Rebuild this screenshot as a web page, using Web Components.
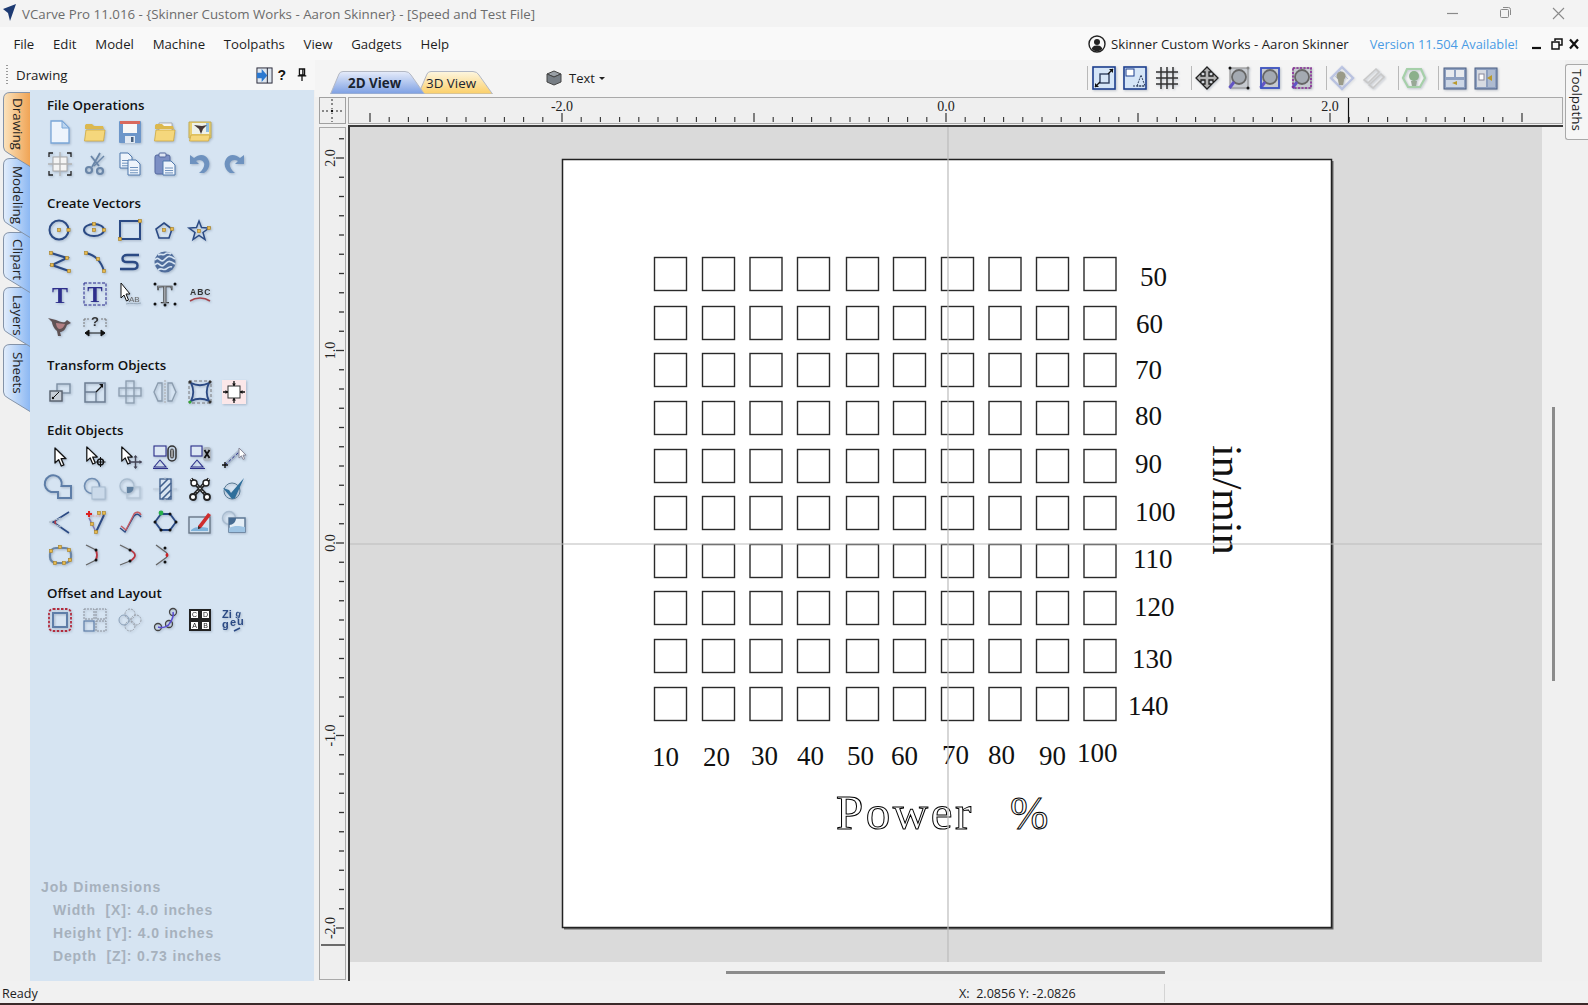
<!DOCTYPE html>
<html lang="en">
<head>
<meta charset="utf-8">
<title>VCarve Pro</title>
<style>
  html, body { margin: 0; height: 100%; background: #f0f0f0; overflow: hidden; }
  body { font: 13px "Open Sans", "Liberation Sans", sans-serif; color: #1c1c1c; }
  #app { display: flex; flex-direction: column; width: 1588px; height: 1005px; }
</style>
</head>
<body>
<div id="app">
  <vc-titlebar>VCarve Pro 11.016 - {Skinner Custom Works - Aaron Skinner} - [Speed and Test File]</vc-titlebar>
  <vc-menubar></vc-menubar>
  <vc-main>
    <vc-sidebar slot="side">
      <vc-group label="File Operations">
        <vc-icon name="new"></vc-icon><vc-icon name="open"></vc-icon><vc-icon name="save"></vc-icon><vc-icon name="openDoc"></vc-icon><vc-icon name="openImg"></vc-icon><i></i>
        <vc-icon name="selAll"></vc-icon><vc-icon name="scissors"></vc-icon><vc-icon name="copy"></vc-icon><vc-icon name="paste"></vc-icon><vc-icon name="undo"></vc-icon><vc-icon name="redo"></vc-icon>
      </vc-group>
      <vc-group label="Create Vectors">
        <vc-icon name="circle"></vc-icon><vc-icon name="ellipse"></vc-icon><vc-icon name="rect"></vc-icon><vc-icon name="polygon"></vc-icon><vc-icon name="star"></vc-icon><i></i>
        <vc-icon name="polyline"></vc-icon><vc-icon name="curve"></vc-icon><vc-icon name="sline"></vc-icon><vc-icon name="wave"></vc-icon><i></i><i></i>
        <vc-icon name="text"></vc-icon><vc-icon name="textBox"></vc-icon><vc-icon name="textCursor"></vc-icon><vc-icon name="textScale"></vc-icon><vc-icon name="textArc"></vc-icon><i></i>
        <vc-icon name="bird"></vc-icon><vc-icon name="dimension"></vc-icon>
      </vc-group>
      <vc-group label="Transform Objects" style="margin-bottom:14px">
        <vc-icon name="move"></vc-icon><vc-icon name="scale"></vc-icon><vc-icon name="align"></vc-icon><vc-icon name="mirror"></vc-icon><vc-icon name="distort"></vc-icon><vc-icon name="center"></vc-icon>
      </vc-group>
      <vc-group label="Edit Objects" rows="32px 32px 34px 32px" style="margin-bottom:14px">
        <vc-icon name="arrow"></vc-icon><vc-icon name="arrowNode"></vc-icon><vc-icon name="arrowMove"></vc-icon><vc-icon name="group"></vc-icon><vc-icon name="ungroup"></vc-icon><vc-icon name="measure"></vc-icon>
        <vc-icon name="weld"></vc-icon><vc-icon name="subtract"></vc-icon><vc-icon name="intersect"></vc-icon><vc-icon name="hatch"></vc-icon><vc-icon name="trim"></vc-icon><vc-icon name="check"></vc-icon>
        <vc-icon name="vee"></vc-icon><vc-icon name="nodes"></vc-icon><vc-icon name="smooth"></vc-icon><vc-icon name="closed"></vc-icon><vc-icon name="pencil"></vc-icon><vc-icon name="fade"></vc-icon>
        <vc-icon name="loop"></vc-icon><vc-icon name="fillet1"></vc-icon><vc-icon name="fillet2"></vc-icon><vc-icon name="fillet3"></vc-icon>
      </vc-group>
      <vc-group label="Offset and Layout">
        <vc-icon name="offset"></vc-icon><vc-icon name="dashSquares"></vc-icon><vc-icon name="dashCircles"></vc-icon><vc-icon name="linked"></vc-icon><vc-icon name="nest"></vc-icon><vc-icon name="zigzag"></vc-icon>
      </vc-group>
      <vc-job slot="job"></vc-job>
    </vc-sidebar>
    <vc-workspace slot="work"></vc-workspace>
  </vc-main>
  <vc-statusbar></vc-statusbar>
</div>

<script>
// Small helpers used by the icon table.
const NAVY = '#2b4a84'
const SLATE = '#6a86a8'
const handle = (x, y) => `<rect x="${x - 1.6}" y="${y - 1.6}" width="3.2" height="3.2" fill="#e6b94f" stroke="#a5802b" stroke-width=".6"/>`
const dot = (x, y, c = '#111', r = 1.5) => `<circle cx="${x}" cy="${y}" r="${r}" fill="${c}"/>`
const pointer = (t = '') => `<path d="M4 2v15l3.6-3.4 2.7 6.4 2.6-1.1-2.7-6.2H15z" fill="#fff" stroke="#111" stroke-width="1.3" stroke-linejoin="round" transform="${t}"/>`
const folder = '<path d="M2 9V5.5L3 4h6l2 2h9l1 3z" fill="#dcb84e"/><path d="M1.5 21 3 10h19l-1.5 11z" fill="#f5d77c" stroke="#cfa93f" stroke-width=".8"/>'
const page = (x, y, w, h, f = '#eef4fb') => `<path d="M${x} ${y}h${w - 4}l4 4v${h - 4}h-${w}z" fill="${f}" stroke="#4f78ad"/><path d="M${x + 2} ${y + h * 0.5}h${w - 4}M${x + 2} ${y + h * 0.68}h${w - 4}M${x + 2} ${y + h * 0.85}h${w - 4}" stroke="#4f78ad" stroke-width=".8"/>`
const mag = extra => `<rect x="3" y="2" width="18" height="20" fill="#c6cad0" stroke="#8a8a8a"/><circle cx="12" cy="11" r="7" fill="#a4aab2" stroke="#666" stroke-width="1.8"/><path d="M7 16 2.5 22" stroke="#6255c4" stroke-width="3"/>${extra}`
const panel = inner => `<rect x="1" y="2" width="22" height="21" fill="#8d9fbf" stroke="#4d6186"/>${inner}`

const ICONS = {
  new: '<path d="M3 1h11l7 7v15H3z" fill="#edf4fc" stroke="#79a6d8" stroke-width="1.3"/><path d="M14 1v7h7z" fill="#bcd5ef" stroke="#79a6d8"/>',
  open: folder,
  save: '<rect x="1" y="1" width="22" height="22" rx="1" fill="#6d96c9"/><rect x="2" y="1" width="20" height="3" fill="#d9685c"/><rect x="5" y="4" width="14" height="9" fill="#f7f7f7"/><rect x="7" y="16" width="10" height="7" fill="#e1e9f3"/><rect x="13" y="17" width="2.5" height="5" fill="#49617f"/>',
  openDoc: `<path d="M6 3h13v10H6z" fill="#f4f4f4" stroke="#999" stroke-width=".7"/>${folder}`,
  openImg: '<path d="M1 2h22v16H1z" fill="#e8cf72" stroke="#c3ad55"/><path d="M4 3h17v11H4z" fill="#eef1e8"/><path d="M18 3h3v9h-3z" fill="#8fbde0"/><path d="M6 5l8 1 5-1-4 4-2 5-2-5z" fill="#463838"/><path d="M1.5 21 3 15h19l-1.5 6z" fill="#f5d77c" stroke="#cfa93f" stroke-width=".8"/>',
  selAll: '<rect x="5" y="5" width="14" height="14" fill="#f4f4f4" stroke="#a8a8a8"/><path d="M12 0v24M0 12h24" stroke="#b2b2b2" stroke-width="1.3"/><path d="M1 5V1h4M19 1h4v4M23 19v4h-4M5 23H1v-4" fill="none" stroke="#222" stroke-width="1.3"/>',
  scissors: `<path d="M17 1 9 15M8 4l8 10" stroke="${SLATE}" stroke-width="1.8"/><path d="M21 4 11 14" stroke="${SLATE}" stroke-width="1.5"/><circle cx="6" cy="18" r="3" fill="none" stroke="${SLATE}" stroke-width="2.2"/><circle cx="17" cy="19" r="3" fill="none" stroke="${SLATE}" stroke-width="2.2"/>`,
  copy: page(2, 1, 12, 15) + page(10, 8, 12, 15),
  paste: '<rect x="2" y="3" width="15" height="19" rx="2" fill="#7c8fc4" stroke="#54689e"/><rect x="6" y="1" width="7" height="4" rx="1" fill="#dde4f2" stroke="#54689e"/>' + page(10, 9, 12, 14),
  undo: '<path d="M2 3v9h9L8 9c3-2 7-1 8 2 1 3-1 7-5 10h5c5-3 7-9 4-14C17 2 11 2 6 6z" fill="#6e92bf"/>',
  redo: '<path d="M22 3v9h-9l3-3c-3-2-7-1-8 2-1 3 1 7 5 10H8C3 18 1 12 4 7 7 2 13 2 18 6z" fill="#6e92bf"/>',

  circle: `<circle cx="11" cy="12" r="9.5" fill="none" stroke="${NAVY}" stroke-width="2"/>${handle(11, 12)}${handle(20.5, 12)}`,
  ellipse: `<ellipse cx="11" cy="12" rx="10" ry="6" fill="none" stroke="${NAVY}" stroke-width="2"/>${handle(11, 12)}${handle(11, 6)}${handle(21, 12)}`,
  rect: `<rect x="2" y="3" width="20" height="18" fill="none" stroke="${NAVY}" stroke-width="2"/>${handle(2, 21)}${handle(22, 3)}`,
  polygon: `<path d="M11 5l8 6-3 9H6l-3-9z" fill="none" stroke="${NAVY}" stroke-width="1.6"/>${handle(11, 12)}${handle(19, 11)}`,
  star: `<path d="M11 3l2.5 6.5 7.5.5-6 4.5 2 7-6-4-6 4 2-7-6-4.5 7.5-.5z" fill="none" stroke="${NAVY}" stroke-width="1.5"/>${handle(11, 13)}${handle(21, 10)}`,
  polyline: `<path d="M3 3l16 5L4 15l17 6" fill="none" stroke="${NAVY}" stroke-width="2.2"/>${handle(3, 3)}${handle(19, 8)}${handle(4, 15)}${handle(21, 21)}`,
  curve: `<path d="M3 3c9 2 15 8 18 18" fill="none" stroke="${NAVY}" stroke-width="1.8"/>${handle(3, 3)}${handle(15, 9)}${handle(21, 21)}`,
  sline: `<path d="M21 5H9c-6 0-6 7 0 7h6c6 0 6 7 0 7H2" fill="none" stroke="${NAVY}" stroke-width="2.4"/>`,
  wave: `<circle cx="12" cy="12" r="10.5" fill="#4f6d9c"/><path d="M2 10c4-5 5 4 9 0s5-5 11-1M2 15c4-5 5 4 9 0s5-5 11-1M5 20c4-3 5 1 8-1s4-3 6-2M5 5c3-2 5 1 7-1s4-1 6 0" fill="none" stroke="#d6e4f2" stroke-width="1.7"/>`,
  text: `<text x="12" y="21" text-anchor="middle" font-family="Liberation Serif" font-weight="700" font-size="24" fill="#2e2f8c">T</text>`,
  textBox: `<rect x="1" y="1" width="22" height="22" fill="none" stroke="#25258a" stroke-dasharray="3 1.5"/><text x="12" y="20" text-anchor="middle" font-family="Liberation Serif" font-weight="700" font-size="23" fill="#2e2f8c">T</text>`,
  textCursor: `<path d="M3 1v15l3-3 2.5 6 2-1-2.5-6H12z" fill="#fff" stroke="#111"/><text x="11" y="20" font-family="Liberation Sans" font-size="8" fill="#666">AB</text><path d="M8 22c5-2 10 1 15-1" stroke="#9ab" fill="none"/>`,
  textScale: `<text x="12" y="21" text-anchor="middle" font-family="Liberation Serif" font-size="25" fill="#a0a4aa" stroke="#333" stroke-width=".6">T</text>${dot(2, 2)}${dot(22, 2)}${dot(2, 22)}${dot(22, 22)}${dot(12, 23)}`,
  textArc: `<text x="2" y="13" font-family="Liberation Sans" font-weight="700" font-size="8.5" letter-spacing="1" fill="#333">ABC</text><path d="M2 19c6-4 14-4 20 0" fill="none" stroke="#a5434a" stroke-width="1.6"/>`,
  bird: '<path d="M0 4l8 2c3 1 6 3 9 2l2-2 4 3-4 2c-2 5-4 7-7 7l1 4h-3l-1-5C6 15 4 10 4 8z" fill="#5f5254"/><path d="M8 9c3 0 6 1 9 1-1 3-3 5-6 5-2-1-3-4-3-6z" fill="#b27f83"/>',
  dimension: `<path d="M1 5h5M18 5h5M1 5v9M23 5v9" stroke="#777" stroke-dasharray="2 1"/><text x="12" y="12" text-anchor="middle" font-family="Liberation Sans" font-weight="700" font-size="13" fill="#333">?</text><path d="M2 19h20M2 19l4-3v6zM22 19l-4-3v6z" stroke="#111" fill="#111"/>`,

  move: '<rect x="9" y="4" width="13" height="9" fill="none" stroke="#7d8fa3" stroke-width="1.4"/><rect x="2" y="11" width="12" height="10" fill="#c7ced7" stroke="#565f6b" stroke-width="1.4"/><path d="M5 18l6-6" stroke="#111"/>' + dot(5, 18, '#111', 1.2),
  scale: '<rect x="2" y="3" width="20" height="19" fill="none" stroke="#6c7d92" stroke-width="1.5"/><path d="M2 12h11V22" fill="none" stroke="#6c7d92" stroke-width="1.3"/><path d="M13 12l6-6" stroke="#111" stroke-width="1.2"/><path d="M20 4v4l-4-4z" fill="#111"/>',
  align: '<rect x="8" y="1" width="8" height="22" fill="none" stroke="#8b9cae" stroke-width="1.3"/><rect x="1" y="8" width="22" height="8" fill="none" stroke="#8b9cae" stroke-width="1.3"/>',
  mirror: '<path d="M9 3H5L1 12l4 9h4zM15 3h4l4 9-4 9h-4z" fill="none" stroke="#8b9cae" stroke-width="1.3"/><path d="M12 0v24" stroke="#a8a8a8" stroke-dasharray="2 1"/>',
  distort: `<path d="M3 3c6 3 12 3 18 0-3 6-3 12 0 18-6-3-12-3-18 0 3-6 3-12 0-18z" fill="none" stroke="${NAVY}" stroke-width="1.8"/><rect x="1" y="1" width="22" height="22" fill="none" stroke="#777" stroke-dasharray="3 2"/>${dot(2, 22, '#3a3')}${dot(22, 22, '#333')}${dot(2, 2, '#333')}${dot(22, 2, '#333')}`,
  center: `<rect x="0" y="0" width="24" height="24" fill="#fbe7e9"/><rect x="6" y="6" width="12" height="12" fill="#fff" stroke="#333"/><path d="M12 1v5M12 18v5M1 12h5M18 12h5" stroke="#111" stroke-width="1.3"/><path d="M12 6l-2-2.5h4zM12 18l-2 2.5h4zM6 12l-2.5-2v4zM18 12l2.5-2v4z" fill="#111"/>`,

  arrow: pointer('translate(3 1)'),
  arrowNode: `${pointer('scale(.95)')}<circle cx="17.5" cy="17" r="3" fill="none" stroke="#111" stroke-width="1.4"/><path d="M17.5 12v10M12.5 17h10" stroke="#111"/>`,
  arrowMove: `${pointer('scale(.95)')}<path d="M17.5 11v12M11.5 17h12" stroke="#445" stroke-width="1.4"/><path d="M17.5 10l-2 2.5h4zM17.5 24l-2-2.5h4zM10.5 17l2.5-2v4zM24 17l-2.5-2v4z" fill="#445"/>`,
  group: '<rect x="1" y="1" width="12" height="10" fill="#dce7f4" stroke="#2c2f8a" stroke-width="1.1"/><path d="M1 22 7 15l6 7zM0 23.5h15" fill="none" stroke="#2c2f8a" stroke-width="1.1"/><rect x="15" y="1" width="8" height="15" rx="4" fill="none" stroke="#333" stroke-width="1.5"/><rect x="17.5" y="4" width="3" height="9" rx="1.5" fill="#999" stroke="#333" stroke-width=".8"/>',
  ungroup: '<rect x="3" y="1" width="11" height="10" fill="#dce7f4" stroke="#2c2f8a" stroke-width="1.1"/><path d="M3 22 9 15l6 7zM2 23.5h15" fill="none" stroke="#2c2f8a" stroke-width="1.1"/><rect x="15" y="2" width="8" height="14" rx="3" fill="#aeb6bf"/><path d="M16.5 5l5 8M21.5 5l-5 8" stroke="#111" stroke-width="1.8"/>',
  measure: '<path d="M3 20 19 5" stroke="#8a9cb2" stroke-width="4" opacity=".45"/><path d="M3 20 17 7" stroke="#2c2f8a" stroke-dasharray="3 2"/><path d="M0 20h6M3 17v6" stroke="#111" stroke-width="1.4"/><path d="M17 3v10l2.4-2.2 1.6 3.6 1.6-.7-1.6-3.6H24z" fill="#fff" stroke="#889"/>',

  weld: `<path d="M10 21h13V9h-9.5A8.5 8.5 0 1 0 3 15h7z" fill="none" stroke="#5e7ea8" stroke-width="2"/>`,
  subtract: '<circle cx="9" cy="9" r="7.5" fill="none" stroke="#6f8db2" stroke-width="1.6"/><rect x="9" y="10" width="13" height="12" fill="#cbdaea" stroke="#a8bcd0"/>',
  intersect: '<circle cx="9" cy="9" r="7" fill="none" stroke="#a9bccf" stroke-width="1.3"/><rect x="9" y="10" width="13" height="11" fill="none" stroke="#b4c5d6" stroke-width="1.3"/><path d="M9 10h6.5c0 4-2 6-6.5 6z" fill="#5f7f9f"/>',
  hatch: '<rect x="7" y="2" width="11" height="20" fill="#d7e3f0" stroke="#3f5f8c" stroke-width="1.3"/><path d="M7 10l8-8M7 17 18 6M9 22l9-9M15 22l3-3" stroke="#3f5f8c" stroke-width="1.6"/><path d="M0 12h6M19 12h5M12 0v2M12 22v2" stroke="#bcc9d7"/>',
  trim: '<path d="M3 2l16 17M21 2 5 19" stroke="#222" stroke-width="3.5"/><path d="M3 2l16 17M21 2 5 19" stroke="#fff" stroke-width="1" stroke-dasharray="2 2"/><circle cx="5" cy="20" r="3" fill="#fff" stroke="#222" stroke-width="1.8"/><circle cx="19" cy="20" r="3" fill="#fff" stroke="#222" stroke-width="1.8"/><circle cx="18" cy="6" r="3" fill="#fff" stroke="#222" stroke-width="1.4"/><circle cx="6" cy="6" r="3" fill="#fff" stroke="#222" stroke-width="1.4"/>',
  check: '<ellipse cx="10" cy="14" rx="8" ry="8" fill="none" stroke="#5a7a93"/><path d="M1 11l6 2 2 3L22 1l-9 20-3 1-4-5z" fill="#2f6f9b"/>',

  vee: `<path d="M21 2 5 12l16 11" fill="none" stroke="${NAVY}" stroke-width="1.6"/><path d="M13 8 1 12l12 5" fill="none" stroke="#b7c3cf"/><path d="M8 11q-2 1 0 3" stroke="#b23a46" fill="none" stroke-width="1.6"/>`,
  nodes: `<path d="M13 22 6 6h15z" fill="none" stroke="#e3a7a7" stroke-dasharray="2 1"/><path d="M13 22 21 5" stroke="${NAVY}" stroke-width="2"/><path d="M13 22 6 8" stroke="#7b7ab6" stroke-width="1.4"/><path d="M3 4h6M6 1v6" stroke="#d22" stroke-width="2"/>${handle(13, 22)}${handle(9, 14)}${handle(21, 3)}${handle(16, 3)}`,
  smooth: `<path d="M2 18l5 4L16 6c2-3 5-2 7 1" fill="none" stroke="${NAVY}" stroke-width="1.4"/><path d="M3 16l5 4L16 4c2-3 6-2 7 1" fill="none" stroke="#c65a62" stroke-width="1.4"/>`,
  closed: `<path d="M2 12 8 4h9l6 8-6 8H8z" fill="none" stroke="${NAVY}" stroke-width="1.8"/>${dot(8, 3, '#27b04a', 2.4)}${dot(17, 4)}${dot(23, 12)}${dot(17, 20)}${dot(8, 20)}${dot(2, 12)}`,
  pencil: '<rect x="1" y="7" width="21" height="16" fill="#cfe1f1" stroke="#6a7888" stroke-width="1.4"/><path d="M3 20c5-4 10-3 17-2v3H3z" fill="#7fb2da"/><path d="M10 16 20 3l3 2-10 13-3 1z" fill="#cf2d2d"/><path d="M10 16l3 2-3 1z" fill="#333"/>',
  fade: '<circle cx="7" cy="8" r="6.5" fill="none" stroke="#a8bbcf" stroke-width="1.4"/><rect x="7" y="8" width="16" height="14" fill="#e4eef7" stroke="#5f7a97" stroke-width="1.5"/><path d="M7 8h7c0 4-3 7-7 7z" fill="#466b92"/><path d="M7 18c6-3 10-2 16-1v5H7z" fill="#9ec4e4"/>',

  loop: `<rect x="2" y="5" width="21" height="15" rx="6" fill="none" stroke="#6a85a6" stroke-width="2.2"/>${handle(3, 8)}${handle(12, 4)}${handle(21, 7)}${handle(22, 17)}${handle(16, 20)}${handle(7, 20)}`,
  fillet1: `<path d="M3 2l10 5M3 22l10-5" stroke="#666" stroke-width="1.3"/><path d="M13 7q2 5 0 10" fill="none" stroke="#b9343f" stroke-width="1.8"/>${dot(13, 7)}${dot(13, 17)}`,
  fillet2: `<path d="M2 2l10 5M2 22l10-4" stroke="#666" stroke-width="1.3"/><path d="M12 7q10 5 0 11" fill="none" stroke="#b9343f" stroke-width="1.8"/>${dot(12, 7)}${dot(12, 18)}`,
  fillet3: `<path d="M3 2l11 8M3 22l11-8" stroke="#666" stroke-width="1.3"/><path d="M14 10v4" stroke="#b9343f" stroke-width="1.8"/>${dot(12, 5)}${dot(14, 12, '#c22')}${dot(12, 19)}`,

  offset: '<rect x="1" y="1" width="22" height="22" rx="4" fill="none" stroke="#b22c3e" stroke-width="1.8" stroke-dasharray="2.5 1.5"/><rect x="5" y="5" width="14" height="14" fill="none" stroke="#5e7ea8" stroke-width="2"/>',
  dashSquares: '<g fill="none" stroke="#8a9099" stroke-dasharray="2 1"><rect x="1" y="1" width="10" height="10"/><rect x="13" y="1" width="10" height="10"/><rect x="13" y="13" width="10" height="10"/></g><rect x="1" y="13" width="10" height="10" fill="none" stroke="#5e7ea8" stroke-width="1.2"/>',
  dashCircles: '<g fill="none" stroke="#9aa0a9" stroke-dasharray="2 1"><circle cx="12" cy="6" r="5"/><circle cx="18" cy="12" r="5"/><circle cx="12" cy="18" r="5"/></g><circle cx="6" cy="12" r="5" fill="none" stroke="#8ba0b8"/>',
  linked: `<circle cx="5" cy="19" r="3.5" fill="none" stroke="#444" stroke-width="1.3"/><circle cx="16" cy="16" r="3.5" fill="none" stroke="#444" stroke-width="1.3"/><circle cx="20" cy="4" r="3.5" fill="none" stroke="#444" stroke-width="1.3"/><path d="M5 19c6 2 11-2 11-3M16 16c3-3 5-9 4-12" fill="none" stroke="#5a4ed0" stroke-width="1.6"/>`,
  nest: `<g fill="#fff" stroke="#222" stroke-width="2"><rect x="2" y="2" width="9" height="9"/><rect x="13" y="2" width="9" height="9"/><rect x="2" y="13" width="9" height="9"/><rect x="13" y="13" width="9" height="9"/></g><g font-family="Liberation Sans" font-size="7" text-anchor="middle" fill="#222"><text x="6.5" y="9">C</text><text x="17.5" y="9">D</text><text x="6.5" y="20">A</text><text x="17.5" y="20">B</text></g>`,
  zigzag: `<g font-family="Liberation Sans" font-weight="700" font-size="11" fill="${NAVY}"><text x="0" y="10">Zi</text><text x="13" y="8" transform="rotate(12 13 8)" font-size="9">g</text><text x="0" y="20">g</text><text x="8" y="18">e</text><text x="15" y="17">u</text></g><path d="M12 23l6-3" stroke="${NAVY}" stroke-width="1.6"/>`,

  // Top view toolbar
  zoomBox: '<rect x="1" y="1" width="22" height="22" fill="#d5e5f7" stroke="#1d3f8e" stroke-width="1.6"/><rect x="8" y="8" width="9" height="9" fill="none" stroke="#30405f" stroke-width="1.4"/><path d="M3 21l5-5M16 8l5-5" stroke="#111" stroke-width="1.3"/><path d="M3 21v-4l4 4zM21 3v4l-4-4z" fill="#111"/>',
  viewSplit: '<rect x="1" y="1" width="22" height="22" fill="#d5e5f7" stroke="#1d3f8e" stroke-width="1.6"/><rect x="3" y="3" width="8" height="7" fill="#fff" stroke="#1d3f8e"/><path d="M14 20l4-11 4 11zM10 20h12" fill="none" stroke="#30405f" stroke-dasharray="2 1"/>',
  grid: '<path d="M6 1v22M12 1v22M18 1v22M1 6h22M1 12h22M1 18h22" stroke="#333" stroke-width="1.5"/>',
  pan: '<path d="M12 1l5 5h-3v4h4V7l5 5-5 5v-3h-4v4h3l-5 5-5-5h3v-4H6v3l-5-5 5-5v3h4V6H7z" fill="#b2b2b2" stroke="#222" stroke-width="1.3"/>',
  zoomFit: mag(`${dot(3, 2)}${dot(21, 22)}${dot(21, 2, '#888')}`),
  zoomAll: mag('<rect x="3" y="2" width="18" height="20" fill="none" stroke="#3f55c4" stroke-width="1.8"/>'),
  zoomSel: mag('<rect x="3" y="2" width="18" height="20" fill="none" stroke="#8b2b9c" stroke-width="1.6" stroke-dasharray="2 1.5"/>'),
  fadeA: '<g opacity=".45"><path d="M12 1 23 12 12 23 1 12z" fill="none" stroke="#8597d6" stroke-width="2.4"/><path d="M4 9l9 9M9 4l9 9" stroke="#8597d6"/></g><circle cx="11" cy="10" r="4.5" fill="#9a9a88"/><path d="M8 14h6l-1 5h-4z" fill="#9a9a88"/>',
  fadeB: '<path d="M2 14 14 3l3 3L6 17zM7 19 19 8l3 3-11 11z" fill="none" stroke="#c8c8c8" stroke-width="1.6"/>',
  fadeC: '<path d="M5 3h14l4 9-5 9H6l-5-9z" fill="none" stroke="#a6d0a9" stroke-width="2.2"/><circle cx="12" cy="10" r="5" fill="#8bb08b"/><path d="M9 15h6l-1 5h-4z" fill="#98a896"/>',
  layoutA: panel('<rect x="3" y="4" width="8" height="7" fill="#e8eaee"/><rect x="13" y="4" width="8" height="7" fill="#e8eaee"/><rect x="3" y="14" width="18" height="7" fill="#cdd7e6"/><path d="M14 15v4l-5-2z" fill="#b99a2e"/>'),
  layoutB: panel('<rect x="3" y="4" width="9" height="17" fill="#d7dbe2"/><rect x="5" y="8" width="5" height="6" fill="#fff" stroke="#889"/><rect x="14" y="4" width="7" height="17" fill="#aebbd0"/><path d="M18 9v6l-5-3z" fill="#b99a2e"/>')
}

/**
 * One toolbar or panel icon, drawn from the table above.
 */
customElements.define('vc-icon', class extends HTMLElement {
  connectedCallback () {
    if (this.shadowRoot) return
    this.attachShadow({ mode: 'open' }).innerHTML = `
      <style>
        :host { display: flex; align-items: center; justify-content: center; }
        svg { width: 24px; height: 24px; overflow: visible; filter: drop-shadow(1px 1px 1px rgb(60 80 110 / 30%)); }
      </style>
      <svg viewBox="0 0 24 24">${ICONS[this.getAttribute('name')] || ''}</svg>`
  }
})

// Window title with the app mark and the system buttons.
customElements.define('vc-titlebar', class extends HTMLElement {
  constructor () {
    super()
    this.attachShadow({ mode: 'open' }).innerHTML = `
      <style>
        :host { display: flex; align-items: center; height: 27px; background: #f3f3f3; color: #6c6c6c; font: 13.3px "Open Sans", sans-serif; flex: none; }
        .logo { width: 22px; height: 27px; flex: none; }
        .title { flex: 1; white-space: nowrap; }
        .ctl { display: flex; padding-right: 3px; }
        .ctl svg { width: 53px; height: 27px; }
      </style>
      <svg class="logo" viewBox="0 0 22 27"><path d="M3 9 16 4 10 21 8 13z" fill="#1d3a72"/></svg>
      <span class="title"><slot></slot></span>
      <div class="ctl">
        <svg viewBox="0 0 53 27"><path d="M21 13.5h11" stroke="#8a8a8a" stroke-width="1.2"/></svg>
        <svg viewBox="0 0 53 27"><rect x="21.5" y="9.5" width="8" height="8" rx="1" fill="none" stroke="#8a8a8a"/><path d="M24 7.5h5.5a2 2 0 0 1 2 2V15" fill="none" stroke="#8a8a8a"/></svg>
        <svg viewBox="0 0 53 27"><path d="M21 8l11 11M32 8 21 19" stroke="#8a8a8a" stroke-width="1.1"/></svg>
      </div>`
  }
})

// Main menu, account name and the update note.
customElements.define('vc-menubar', class extends HTMLElement {
  constructor () {
    super()
    const items = ['File', 'Edit', 'Model', 'Machine', 'Toolpaths', 'View', 'Gadgets', 'Help']
    this.attachShadow({ mode: 'open' }).innerHTML = `
      <style>
        :host { display: flex; align-items: center; height: 33px; background: #f9f9f9; font: 13.2px "Open Sans", sans-serif; color: #1d1d1d; flex: none; padding-left: 4px; }
        span.m { padding: 0 9.4px; }
        .user { margin-left: auto; display: flex; align-items: center; gap: 5px; }
        .user svg { width: 18px; height: 18px; }
        .ver { color: #4a9be4; margin-left: 21px; font-size: 12.8px; }
        .mdi { display: flex; margin-left: 10px; margin-right: 3px; }
        .mdi svg { width: 19px; height: 14px; }
      </style>
      ${items.map(i => `<span class="m">${i}</span>`).join('')}
      <div class="user">
        <svg viewBox="0 0 18 18"><circle cx="9" cy="9" r="8" fill="none" stroke="#222" stroke-width="1.4"/><circle cx="9" cy="7" r="3" fill="#222"/><path d="M3.8 14c.6-3 2.6-3.6 5.2-3.6s4.6.6 5.2 3.6c-1.4 1.5-3.2 2.2-5.2 2.2s-3.8-.7-5.2-2.2z" fill="#222"/></svg>
        <span>Skinner Custom Works - Aaron Skinner</span>
      </div>
      <span class="ver">Version 11.504 Available!</span>
      <div class="mdi">
        <svg viewBox="0 0 19 14"><path d="M4 11h9" stroke="#111" stroke-width="2.2"/></svg>
        <svg viewBox="0 0 19 14"><rect x="5" y="5" width="7" height="7" fill="none" stroke="#111" stroke-width="1.5"/><path d="M8 4V2h7v6h-3" fill="none" stroke="#111" stroke-width="1.5"/></svg>
        <svg viewBox="0 0 19 14"><path d="M4 2.5l8 9M12 2.5l-8 9" stroke="#111" stroke-width="2.2"/></svg>
      </div>`
  }
})

// Row holding the left dock and the view area.
customElements.define('vc-main', class extends HTMLElement {
  constructor () {
    super()
    this.attachShadow({ mode: 'open' }).innerHTML = `
      <style>:host { display: flex; flex: 1; min-height: 0; }</style>
      <slot name="side"></slot><slot name="work"></slot>`
  }
})

// Left dock: header, vertical tabs and the tool panel.
customElements.define('vc-sidebar', class extends HTMLElement {
  constructor () {
    super()
    this.attachShadow({ mode: 'open' }).innerHTML = `
      <style>
        :host { display: flex; flex-direction: column; width: 315px; flex: none; }
        .head { height: 30px; background: #f7f7f7; display: flex; align-items: center; padding-left: 6px; padding-right: 7px; font: 13.3px "Open Sans", sans-serif; flex: none; }
        .grip { width: 2px; height: 21px; margin-right: 8px; background: repeating-linear-gradient(#9a9a9a 0 1px, transparent 1px 3px); }
        .btns { margin-left: auto; display: flex; align-items: center; gap: 4px; }
        .q { font: bold 14px "Liberation Sans", sans-serif; color: #111; }
        .body { flex: 1; display: flex; min-height: 0; }
        .tabs { width: 30px; flex: none; padding-top: 2px; padding-left: 3px; box-sizing: border-box; display: flex; flex-direction: column; background: #f0f0f0; }
        .panel { width: 284px; flex: none; background: #d6e4f2; display: flex; flex-direction: column; padding: 7px 0 0 13px; box-sizing: border-box; }
        .job { margin-top: auto; }
      </style>
      <div class="head">
        <div class="grip"></div><span>Drawing</span>
        <div class="btns">
          <svg width="17" height="17" viewBox="0 0 18 18"><rect x="1" y="1" width="16" height="16" fill="#dfe6ee" stroke="#223"/><path d="M12 1v16" stroke="#223"/><path d="M1 6h5V2l6 7-6 7v-4H1z" fill="#2b78d0"/></svg>
          <span class="q">?</span>
          <svg width="12" height="14" viewBox="0 0 14 16" style="margin-left:6px"><path d="M4 1h6v7H4zM8 2v5M2 9h10M7 9v6" fill="none" stroke="#111" stroke-width="1.5"/></svg>
        </div>
      </div>
      <div class="body">
        <div class="tabs">
          <vc-side-tab h="75" lead="6" z="9" color="orange">Drawing</vc-side-tab>
          <vc-side-tab h="80" lead="8" z="8" style="margin-top:-9px">Modeling</vc-side-tab>
          <vc-side-tab h="61" lead="7" z="7" style="margin-top:-6px">Clipart</vc-side-tab>
          <vc-side-tab h="60" lead="8" z="6" style="margin-top:-6px">Layers</vc-side-tab>
          <vc-side-tab h="68" lead="8" z="5" style="margin-top:-3px">Sheets</vc-side-tab>
        </div>
        <div class="panel">
          <slot></slot>
          <div class="job"><slot name="job"></slot></div>
        </div>
      </div>`
  }
})

// Vertical dock tab with a slanted lower edge.
customElements.define('vc-side-tab', class extends HTMLElement {
  connectedCallback () {
    if (this.shadowRoot) return
    const h = +this.getAttribute('h')
    const orange = this.getAttribute('color') === 'orange'
    const id = orange ? 'o' : 'b'
    const stops = orange ? ['#fbe3bd', '#f0a455'] : ['#e3eefc', '#8cb8f3']
    this.attachShadow({ mode: 'open' }).innerHTML = `
      <style>
        :host { display: block; position: relative; width: 27px; height: ${h}px; z-index: ${this.getAttribute('z')}; flex: none; }
        svg { position: absolute; inset: 0; }
        span { position: relative; display: block; writing-mode: vertical-rl; padding-top: ${this.getAttribute('lead')}px; padding-left: 1px; font: 13.4px/28px "Open Sans", sans-serif; color: #222; }
      </style>
      <svg width="27" height="${h}" viewBox="0 0 27 ${h}">
        <defs><linearGradient id="${id}" x1="0" x2="1" y1="0" y2="0"><stop offset="0" stop-color="${stops[0]}"/><stop offset="1" stop-color="${stops[1]}"/></linearGradient></defs>
        <path d="M27 .5H7Q.5 .5 .5 7V${h - 20}Q.5 ${h - 16} 5 ${h - 14}L27 ${h - .5}" fill="url(#${id})" stroke="#8493a8"/>
      </svg>
      <span><slot></slot></span>`
  }
})

// Titled block of tool icons on a fixed column grid.
customElements.define('vc-group', class extends HTMLElement {
  connectedCallback () {
    if (this.shadowRoot) return
    const rows = this.getAttribute('rows') || ''
    this.attachShadow({ mode: 'open' }).innerHTML = `
      <style>
        :host { display: block; margin-bottom: 15px; }
        h3 { margin: 0 0 3px 4px; font: 600 13.3px/16px "Open Sans", sans-serif; color: #111; }
        .grid { display: grid; grid-template-columns: repeat(6, 34.8px); ${rows ? `grid-template-rows: ${rows};` : ''} grid-auto-rows: 32px; }
        ::slotted(vc-icon) { height: 100%; }
      </style>
      <h3>${this.getAttribute('label')}</h3>
      <div class="grid"><slot></slot></div>`
  }
})

// Job size readout at the foot of the panel.
customElements.define('vc-job', class extends HTMLElement {
  constructor () {
    super()
    this.attachShadow({ mode: 'open' }).innerHTML = `
      <style>
        :host { display: block; margin-left: -2px; padding-bottom: 13px; font: bold 14px/23px "Liberation Sans", sans-serif; letter-spacing: .85px; color: #a6b1bd; }
        div { padding-left: 12px; white-space: pre; }
        div.t { padding-left: 0; }
      </style>
      <div class="t">Job Dimensions</div>
      <div>Width  [X]: 4.0 inches</div>
      <div>Height [Y]: 4.0 inches</div>
      <div>Depth  [Z]: 0.73 inches</div>`
  }
})

// One view tab, 2D or 3D.
customElements.define('vc-view-tab', class extends HTMLElement {
  connectedCallback () {
    if (this.shadowRoot) return
    const on = this.hasAttribute('active')
    const id = on ? 'tb' : 'ty'
    const c = on ? ['#e6ecfa', '#7c9fe3'] : ['#fdf6e0', '#fbcf68']
    const w = +this.getAttribute('w')
    this.attachShadow({ mode: 'open' }).innerHTML = `
      <style>
        :host { position: relative; display: block; height: 23px; width: ${w}px; flex: none; z-index: ${on ? 2 : 1}; }
        svg { position: absolute; inset: 0; width: 100%; height: 100%; }
        span { position: relative; display: block; padding-left: ${this.getAttribute('pad')}px; font: ${on ? 700 : 400} 13.4px/25px "Open Sans", sans-serif; color: #1a2430; }
      </style>
      <svg viewBox="0 0 ${w} 23" preserveAspectRatio="none">
        <defs><linearGradient id="${id}" x1="0" x2="0" y1="0" y2="1"><stop offset="0" stop-color="${c[0]}"/><stop offset="1" stop-color="${c[1]}"/></linearGradient></defs>
        <path d="M.5 23 9 3Q10 .5 13 .5H${w - 20}Q${w - 16} .5 ${w - 14} 4L${w - .5} 23z" fill="url(#${id})" stroke="#b3b8c4"/>
      </svg>
      <span><slot></slot></span>`
  }
})

// 2D/3D tabs, layer picker and view buttons.
customElements.define('vc-view-toolbar', class extends HTMLElement {
  constructor () {
    super()
    const ic = n => `<vc-icon name="${n}"></vc-icon>`
    this.attachShadow({ mode: 'open' }).innerHTML = `
      <style>
        :host { display: flex; height: 37px; align-items: flex-start; background: #f4f4f4; padding-right: 63px; flex: none; }
        .tabs { display: flex; margin: 11px 0 0 15px; }
        .layer { display: flex; align-items: center; margin: 8px 0 0 53px; gap: 7px; font: 13px/20px "Open Sans", sans-serif; }
        .layer b { width: 0; height: 0; border: 3px solid transparent; border-top: 3.5px solid #222; border-bottom: 0; margin-left: -3px; }
        .icons { margin-left: auto; display: flex; align-items: center; height: 37px; margin-top: -1px; }
        vc-icon { width: 31.5px; }
        .sep { width: 1px; height: 24px; background: #b9b9b9; margin-left: 8px; }
        .sep:first-child { margin-left: 0; }
      </style>
      <div class="tabs">
        <vc-view-tab active w="95" pad="18">2D View</vc-view-tab>
        <vc-view-tab w="75" pad="8" style="margin-left:-7px">3D View</vc-view-tab>
      </div>
      <div class="layer">
        <svg width="16" height="16" viewBox="0 0 16 16"><path d="M8 1l7 3-7 3-7-3z" fill="#9aa0a6" stroke="#444"/><path d="M1 4v8l7 3 7-3V4l-7 3z" fill="#777e85" stroke="#444"/></svg>
        <span>Text</span><b></b>
      </div>
      <div class="icons">
        <div class="sep"></div>${['zoomBox', 'viewSplit', 'grid'].map(ic).join('')}
        <div class="sep"></div>${['pan', 'zoomFit', 'zoomAll', 'zoomSel'].map(ic).join('')}
        <div class="sep"></div>${['fadeA', 'fadeB'].map(ic).join('')}
        <div class="sep"></div>${['fadeC'].map(ic).join('')}
        <div class="sep"></div>${['layoutA', 'layoutB'].map(ic).join('')}
      </div>`
  }
})

// Inch ruler, along the top or down the left.
customElements.define('vc-ruler', class extends HTMLElement {
  connectedCallback () {
    if (this.shadowRoot) return
    const top = this.getAttribute('side') === 'top'
    let marks = ''
    if (top) {
      for (let n = -30; n <= 30; n++) {
        const x = 946 + n * 19.2
        const major = n % 10 === 0
        marks += `<path d="M${x} ${major ? 113 : 117}V122" stroke="#333" stroke-width="${major ? 1.2 : 1.1}"/>`
      }
      for (const v of [-2, 0, 2]) {
        marks += `<text x="${946 + v * 192}" y="111" text-anchor="middle">${v.toFixed(1)}</text>`
      }
      marks += '<path d="M1348.5 98V123" stroke="#111" stroke-width="1.2"/>'
    } else {
      for (let n = -21; n <= 20; n++) {
        const y = 543 + n * 19.25
        const major = n % 10 === 0
        marks += `<path d="M${major ? 336 : 339} ${y}H344" stroke="#333" stroke-width="1.3"/>`
      }
      for (const v of [2, 1, 0, -1, -2]) {
        const y = 543 - v * 192.5
        marks += `<text transform="translate(335 ${y}) rotate(-90)" text-anchor="middle">${v.toFixed(1)}</text>`
      }
      marks += '<path d="M321 945H345" stroke="#111" stroke-width="1.2"/>'
    }
    const box = top ? '348 97 1215 27' : '319 127 27 853'
    const [, , w, h] = box.split(' ')
    this.attachShadow({ mode: 'open' }).innerHTML = `
      <style>
        :host { display: block; width: ${w}px; height: ${h}px; }
        svg { display: block; background: #efefef; outline: 1px solid #a9a9a9; outline-offset: -1px; }
        text { font: 14px "Liberation Serif", serif; fill: #222; }
      </style>
      <svg width="${w}" height="${h}" viewBox="${box}">${marks}</svg>`
  }
})

// The job: gray canvas, white sheet and the test grid with its labels.
customElements.define('vc-canvas', class extends HTMLElement {
  constructor () {
    super()
    const rowsY = [257, 306, 353, 401, 449, 496, 544, 591, 639, 687]
    const colsX = [654, 702, 749.5, 797, 846, 893, 941, 988.5, 1036, 1083.5]
    const right = [[50, 1140, 286], [60, 1136, 333], [70, 1135, 379], [80, 1135, 425], [90, 1135, 473], [100, 1135, 521], [110, 1133, 568], [120, 1134, 616], [130, 1132, 668], [140, 1128, 715]]
    const bottom = [[10, 652, 766], [20, 703, 766], [30, 751, 765], [40, 797, 765], [50, 847, 765], [60, 891, 765], [70, 942, 764], [80, 988, 764], [90, 1039, 765], [100, 1077, 762]]
    let boxes = ''
    for (const y of rowsY) {
      for (const x of colsX) {
        boxes += `<rect x="${x + 0.5}" y="${y + 0.5}" width="32" height="33"/>`
      }
    }
    const label = ([t, x, y]) => `<text x="${x}" y="${y}">${t}</text>`
    this.attachShadow({ mode: 'open' }).innerHTML = `
      <style>
        :host { display: block; width: 1192px; height: 835px; }
        svg { display: block; background: #dadada; }
        .boxes rect { fill: none; stroke: #2a2a2a; stroke-width: 1.4; }
        text { font-family: "Liberation Serif", serif; fill: #111; }
        .num text { font-size: 27px; }
        .big { font-size: 49px; letter-spacing: 2.5px; fill: #fff; stroke: #000; stroke-width: 1; }
        .big tspan { font-size: 46px; }
      </style>
      <svg width="1192" height="835" viewBox="350 127 1192 835">
        <rect x="564" y="161" width="769.5" height="768.5" fill="#666"/>
        <rect x="562.5" y="159.5" width="769" height="768" fill="#fff" stroke="#222" stroke-width="1.5"/>
        <g class="boxes">${boxes}</g>
        <g class="num">${right.map(label).join('')}${bottom.map(label).join('')}</g>
        <text class="big" x="836" y="829">Power<tspan x="1010">%</tspan></text>
        <text transform="translate(1213 445) rotate(90)" font-size="42">in/min</text>
        <path d="M948 127V962M350 544H1542" stroke="#bcbcbc" stroke-width="1.2"/>
      </svg>`
  }
})

// View area: toolbar, rulers, canvas and scrollbars.
customElements.define('vc-workspace', class extends HTMLElement {
  constructor () {
    super()
    this.attachShadow({ mode: 'open' }).innerHTML = `
      <style>
        :host { display: flex; flex: 1; min-width: 0; }
        .view { width: 1250px; flex: none; display: flex; flex-direction: column; }
        .stage { flex: 1; min-height: 0; display: grid; grid-template-columns: 29px 1215px; grid-template-rows: 28px 1fr; padding-left: 4px; }
        .corner { width: 27px; height: 27px; background: #efefef; outline: 1px solid #a0a0a0; outline-offset: -1px; display: block; }
        .left { margin-top: 2px; }
        .frame { border-top: 2px solid #3a3a3a; border-left: 2px solid #3a3a3a; display: grid; grid-template-columns: 1192px 1fr; grid-template-rows: 835px 1fr; min-height: 0; }
        .vbar { width: 3px; height: 274px; background: #8b8b8b; margin: 280px 0 0 10px; }
        .hbar { width: 439px; height: 3px; background: #8b8b8b; margin: 9px 0 0 376px; }
        .dock { flex: 1; padding-top: 4px; }
        .tpt { display: block; width: 23px; height: 76px; background: #f6f6f6; border: 1px solid #a9a9a9; border-right: 0; border-radius: 3px 0 0 3px; box-sizing: border-box; writing-mode: vertical-rl; font: 13.4px/22px "Open Sans", sans-serif; padding-top: 4px; }
      </style>
      <div class="view">
        <vc-view-toolbar></vc-view-toolbar>
        <div class="stage">
          <svg class="corner" viewBox="0 0 27 27"><path d="M13 2v6M13 11v1M13 16v1M13 20v5M3 14h6M17 14h6" stroke="#222" stroke-dasharray="2 2"/><circle cx="13" cy="14" r="1.2" fill="#111"/></svg>
          <vc-ruler side="top"></vc-ruler>
          <vc-ruler side="left" class="left"></vc-ruler>
          <div class="frame">
            <vc-canvas></vc-canvas>
            <div><div class="vbar"></div></div>
            <div><div class="hbar"></div></div>
          </div>
        </div>
      </div>
      <div class="dock"><span class="tpt">Toolpaths</span></div>`
  }
})

// Status line at the foot of the window.
customElements.define('vc-statusbar', class extends HTMLElement {
  constructor () {
    super()
    this.attachShadow({ mode: 'open' }).innerHTML = `
      <style>
        :host { display: flex; align-items: center; height: 24px; box-sizing: border-box; padding-top: 2px; background: #f1f1f1; border-bottom: 2px solid #3b2a2a; font: 12.6px "Open Sans", sans-serif; color: #1d1d1d; flex: none; }
        .ready { padding-left: 2px; width: 959px; box-sizing: border-box; }
        .pos { width: 205px; white-space: pre; }
        .sep { width: 1px; height: 18px; background: #d4d4d4; }
      </style>
      <span class="ready">Ready</span>
      <span class="pos">X:  2.0856 Y: -2.0826</span>
      <span class="sep"></span>`
  }
})
</script>
</body>
</html>
